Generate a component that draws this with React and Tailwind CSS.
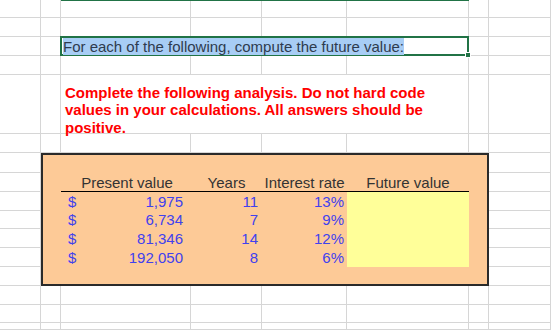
import React from "react";

const cols = [41, 20, 130, 71, 85, 122, 20];
const rows = [18, 19, 19, 19, 59, 19, 20, 19, 19, 18, 19, 19, 19, 19, 18];

const data = [
  ["1,975", "11", "13%"],
  ["6,734", "7", "9%"],
  ["81,346", "14", "12%"],
  ["192,050", "8", "6%"],
];

export default function App() {
  const bgCells = [];
  for (let r = 0; r < rows.length + 1; r++) {
    for (let c = 0; c < cols.length + 1; c++) {
      bgCells.push(
        <div
          key={`bg-${r}-${c}`}
          className="border-r border-b border-[#d6d6d6]"
          style={{ gridRow: r + 1, gridColumn: c + 1 }}
        />
      );
    }
  }

  const font = { fontFamily: '"Liberation Sans", Arial, sans-serif' };

  return (
    <div
      className="grid w-[551px] h-[330px] overflow-hidden bg-white text-[15px] leading-[17px]"
      style={{
        ...font,
        gridTemplateColumns: "41px 20px 130px 71px 85px 122px 20px 1fr",
        gridTemplateRows:
          "18px 19px 19px 19px 59px 19px 20px 19px 19px 18px 19px 19px 19px 19px 18px 1fr",
      }}
    >
      {bgCells}

      {/* merged white cells (hide inner grid lines) */}
      <div className="row-start-3 col-start-3 col-span-4 bg-white border-b border-[#d6d6d6]" />
      <div className="row-start-5 col-start-3 col-span-4 bg-white border-b border-r border-[#d6d6d6]" />

      {/* green line at top */}
      <div className="row-start-1 col-start-3 col-span-4 border-t border-[#217346]" />

      {/* selected cell */}
      <div className="row-start-3 col-start-3 col-span-4 relative -mt-px -ml-px border-2 border-[#217346] flex items-center pl-[1px] whitespace-nowrap">
        <span className="bg-[#a8cdf5] text-[#2e3b4e]">
          For each of the following, compute the future value:
        </span>
        <div className="absolute -right-[4px] -bottom-[4px] w-[6px] h-[6px] bg-[#217346] border border-white" />
      </div>

      {/* red instructions */}
      <div className="row-start-5 col-start-3 col-span-4 pt-[9px] pl-[4px] pr-[40px] font-bold text-[#ff0000] leading-[17.3px]">
        Complete the following analysis. Do not hard code values in your calculations. All answers should be positive.
      </div>

      {/* orange box */}
      <div className="row-start-7 row-span-7 col-start-2 col-span-6 border-2 border-[#2a2a2a] bg-[#fdca97]" />

      {/* header row */}
      <div className="row-start-8 col-start-3 border-b border-black flex items-end justify-center text-[#333]">
        <span className="pl-[2px]">Present value</span>
      </div>
      <div className="row-start-8 col-start-4 border-b border-black flex items-end justify-center text-[#333]">
        Years
      </div>
      <div className="row-start-8 col-start-5 border-b border-black flex items-end justify-center text-[#333] whitespace-nowrap">
        Interest rate
      </div>
      <div className="row-start-8 col-start-6 border-b border-black flex items-end justify-center text-[#333]">
        Future value
      </div>

      {/* yellow answer area */}
      <div className="row-start-9 row-span-4 col-start-6 bg-[#ffff99]" />

      {data.map(([pv, yrs, rate], i) => (
        <React.Fragment key={i}>
          <div
            className="col-start-3 flex items-end justify-between pl-[7px] pr-[8px] pb-[1px] text-[#4141ee]"
            style={{ gridRow: 9 + i }}
          >
            <span>$</span>
            <span>{pv}</span>
          </div>
          <div
            className="col-start-4 flex items-end justify-end pr-[4px] pb-[1px] text-[#4141ee]"
            style={{ gridRow: 9 + i }}
          >
            {yrs}
          </div>
          <div
            className="col-start-5 flex items-end justify-end pr-[3px] pb-[1px] text-[#4141ee]"
            style={{ gridRow: 9 + i }}
          >
            {rate}
          </div>
        </React.Fragment>
      ))}
    </div>
  );
}
